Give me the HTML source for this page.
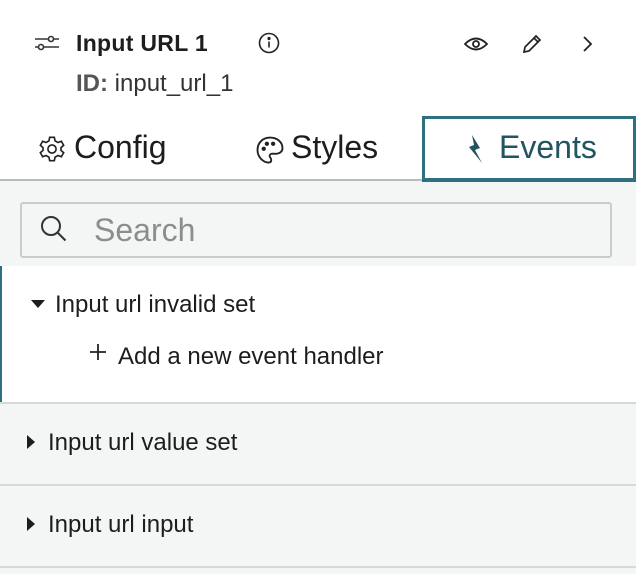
<!DOCTYPE html>
<html><head><style>
body{margin:0;width:636px;height:574px;background:#f4f6f6;font-family:"Liberation Sans",sans-serif;color:#1d1d1d;position:relative;overflow:hidden}
.a{position:absolute;white-space:nowrap}
</style></head><body>
<div class="a" style="left:0;top:0;width:636px;height:180px;background:#fff"></div>
<div class="a" style="left:0;top:179px;width:636px;height:2px;background:#b8bcbc"></div>
<svg class="a" style="left:34px;top:33px" width="26" height="20" viewBox="0 0 26 20" fill="none" stroke="#333" stroke-width="1.6"><path d="M1 6h13M20 6h5M1 14h3M10 14h15"/><circle cx="17" cy="6" r="2.5"/><circle cx="7" cy="14" r="2.5"/></svg>
<div class="a" style="left:76px;top:30px;font-size:23px;font-weight:bold;color:#1d1d1d;letter-spacing:0.3px">Input URL 1</div>
<svg class="a" style="left:258px;top:32px" width="22" height="22" viewBox="0 0 22 22" fill="none" stroke="#222" stroke-width="1.6"><circle cx="11" cy="11" r="9.5"/><path d="M11 9.5v6"/><circle cx="11" cy="6.5" r="0.8" fill="#222"/></svg>
<svg class="a" style="left:463px;top:35px" width="26" height="18" viewBox="0 0 26 18" fill="none" stroke="#222" stroke-width="1.8"><path d="M2 9Q13 -2 24 9Q13 20 2 9Z"/><circle cx="13" cy="9" r="3"/></svg>
<svg class="a" style="left:520px;top:32px" width="24" height="24" viewBox="0 0 24 24" fill="none" stroke="#222" stroke-width="1.7"><path d="M4 20l1-5L16 4l4 4L9 19z M14 6l4 4"/></svg>
<svg class="a" style="left:580px;top:35px" width="14" height="18" viewBox="0 0 14 18" fill="none" stroke="#222" stroke-width="1.8"><path d="M4 2l7 7-7 7"/></svg>
<div class="a" style="left:76px;top:70px;font-size:24px;color:#333"><b style="color:#555">ID:</b> input_url_1</div>
<svg class="a" style="left:38px;top:135px" width="28" height="28" viewBox="0 0 24 24" fill="none" stroke="#222" stroke-width="1.4"><circle cx="12" cy="12" r="3.5"/><path d="M10 2h4l.6 3 2.5 1.4 2.9-1 2 3.4-2.3 2v2.4l2.3 2-2 3.4-2.9-1L14.6 19 14 22h-4l-.6-3-2.5-1.4-2.9 1-2-3.4 2.3-2v-2.4l-2.3-2 2-3.4 2.9 1L9.4 5z"/></svg>
<div class="a" style="left:74px;top:129px;font-size:32px;color:#1d1d1d">Config</div>
<svg class="a" style="left:255px;top:135px" width="30" height="30" viewBox="0 0 24 24" fill="none" stroke="#222" stroke-width="1.5"><path d="M12 2C6 2 2 6.5 2 12s4.5 10 9 10c1.5 0 2-1 2-2 0-1.5-1.3-2-1.3-3.3 0-1 1-1.7 2-1.7h3C20 15 22 13 22 10.5 22 5.5 17.5 2 12 2z"/><circle cx="7" cy="11" r="1" fill="#222"/><circle cx="9.5" cy="7" r="1" fill="#222"/><circle cx="14.5" cy="7" r="1" fill="#222"/></svg>
<div class="a" style="left:291px;top:129px;font-size:32px;color:#1d1d1d">Styles</div>
<div class="a" style="left:422px;top:116px;width:208px;height:59px;border:3px solid #2e6f80;border-bottom-width:4px;background:#fff"></div>
<svg class="a" style="left:466px;top:134px" width="20" height="30" viewBox="0 0 20 30"><path d="M6 1l8 13-5 2 7 13-13-16 5-2z" fill="#22555f"/></svg>
<div class="a" style="left:499px;top:129px;font-size:32px;color:#22555f">Events</div>
<div class="a" style="left:20px;top:202px;width:588px;height:52px;border:2px solid #c8cccc;border-radius:3px;background:#f4f6f6"></div>
<svg class="a" style="left:38px;top:213px" width="32" height="32" viewBox="0 0 32 32" fill="none" stroke="#333" stroke-width="2"><circle cx="13" cy="13" r="9"/><path d="M19.5 19.5l8 8"/></svg>
<div class="a" style="left:94px;top:212px;font-size:32px;color:#8a8e8e">Search</div>
<div class="a" style="left:0;top:266px;width:636px;height:136px;background:#fff;border-left:2px solid #2e6f80;box-sizing:border-box"></div>
<svg class="a" style="left:31px;top:300px" width="14" height="10"><path d="M0 0h14L7 8z" fill="#1d1d1d"/></svg>
<div class="a" style="left:55px;top:291px;font-size:24px">Input url invalid set</div>
<svg class="a" style="left:89px;top:343px" width="18" height="18" fill="none" stroke="#222" stroke-width="1.8"><path d="M9 1v16M1 9h16"/></svg>
<div class="a" style="left:118px;top:343px;font-size:24px">Add a new event handler</div>
<div class="a" style="left:0;top:402px;width:636px;height:2px;background:#d6d9d9"></div>
<svg class="a" style="left:27px;top:435px" width="8" height="14"><path d="M0 0l8 7-8 7z" fill="#1d1d1d"/></svg>
<div class="a" style="left:48px;top:429px;font-size:24px">Input url value set</div>
<div class="a" style="left:0;top:484px;width:636px;height:2px;background:#d6d9d9"></div>
<svg class="a" style="left:27px;top:517px" width="8" height="14"><path d="M0 0l8 7-8 7z" fill="#1d1d1d"/></svg>
<div class="a" style="left:48px;top:511px;font-size:24px">Input url input</div>
<div class="a" style="left:0;top:566px;width:636px;height:2px;background:#d6d9d9"></div>
</body></html>
